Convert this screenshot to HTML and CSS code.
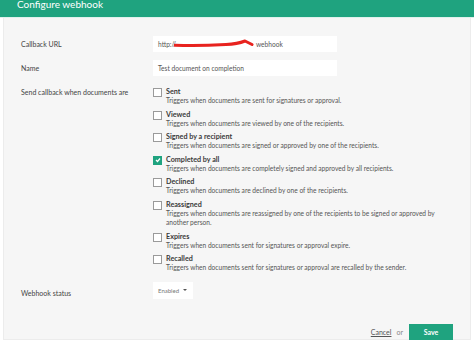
FILE: index.html
```html
<!DOCTYPE html>
<html>
<head>
  <meta charset="utf-8" />
  <title>Configure webhook</title>
  <link rel="stylesheet" href="styles.css">
</head>
<body>
  <div class="header">
    <h1>Configure webhook</h1>
  </div>

  <form class="panel">
    <div class="row">
      <label class="label">Callback URL</label>
      <div class="field">
        <div class="input">http://<span class="redact"><svg width="80" height="9" viewBox="0 0 80 9"><path d="M1 6.2 C18 6.8 36 6.4 52 5.6 C60 5.2 66 4 71 2 L78 5.5" stroke="#e8231f" stroke-width="3" fill="none" stroke-linecap="round" stroke-linejoin="round"/></svg></span>webhook</div>
      </div>
    </div>
    <div class="row">
      <label class="label">Name</label>
      <div class="field">
        <div class="input">Test document on completion</div>
      </div>
    </div>
    <div class="row">
      <label class="label">Send callback when documents are</label>
      <div class="field checks">
        <div class="check">
          <span class="box"></span>
          <div><div class="title">Sent</div><div class="desc">Triggers when documents are sent for signatures or approval.</div></div>
        </div>
        <div class="check">
          <span class="box"></span>
          <div><div class="title">Viewed</div><div class="desc">Triggers when documents are viewed by one of the recipients.</div></div>
        </div>
        <div class="check">
          <span class="box"></span>
          <div><div class="title">Signed by a recipient</div><div class="desc">Triggers when documents are signed or approved by one of the recipients.</div></div>
        </div>
        <div class="check">
          <span class="box checked"><svg width="6" height="6" viewBox="0 0 6 6"><path d="M1 3 L2.5 4.5 L5 1.5" stroke="#fff" stroke-width="1.2" fill="none"/></svg></span>
          <div><div class="title">Completed by all</div><div class="desc">Triggers when documents are completely signed and approved by all recipients.</div></div>
        </div>
        <div class="check">
          <span class="box"></span>
          <div><div class="title">Declined</div><div class="desc">Triggers when documents are declined by one of the recipients.</div></div>
        </div>
        <div class="check">
          <span class="box"></span>
          <div><div class="title">Reassigned</div><div class="desc">Triggers when documents are reassigned by one of the recipients to be signed or approved by another person.</div></div>
        </div>
        <div class="check">
          <span class="box"></span>
          <div><div class="title">Expires</div><div class="desc">Triggers when documents sent for signatures or approval expire.</div></div>
        </div>
        <div class="check">
          <span class="box"></span>
          <div><div class="title">Recalled</div><div class="desc">Triggers when documents sent for signatures or approval are recalled by the sender.</div></div>
        </div>
      </div>
    </div>
    <div class="row status">
      <label class="label">Webhook status</label>
      <div class="field">
        <div class="select">Enabled <span class="caret"></span></div>
      </div>
    </div>
    <div class="actions">
      <a class="cancel">Cancel</a>
      <span class="or">or</span>
      <button type="button" class="save">Save</button>
    </div>
  </form>
</body>
</html>
```

FILE: styles.css
```css
body {
  margin: 0;
  background: #fff;
  font-family: Lato, "Open Sans", sans-serif;
  color: #444;
  width: 474px;
  height: 345px;
  overflow: hidden;
}
.header {
  height: 17px;
  background: #1fa37f;
  border-bottom: 1px solid #dff1ec;
  overflow: hidden;
}
.header h1 {
  margin: -4px 0 0 17px;
  font-size: 10px;
  font-weight: 400;
  line-height: 16px;
  color: #fff;
}
.panel {
  margin: 0 3px 0 3px;
  height: 322px;
  background: #f6f6f6;
  border: 1px solid #ececec;
  border-top: none;
  padding: 18px 0 0 17px;
  box-sizing: border-box;
  font-size: 7px;
}
.row {
  display: grid;
  grid-template-columns: 132px 1fr;
  margin-bottom: 8px;
}
.label {
  line-height: 16px;
  color: #444;
}
.input {
  width: 184px;
  height: 16px;
  box-sizing: border-box;
  background: #fff;
  line-height: 16px;
  padding-left: 5px;
  font-size: 6.6px;
  color: #555;
  display: flex;
  align-items: center;
}
.redact {
  display: inline-flex;
  margin: 0 2px 1px -2px;
}
.checks {
  padding-top: 3px;
}
.check {
  display: flex;
  gap: 4px;
  margin-bottom: 4px;
}
.box {
  width: 7px;
  height: 7px;
  border: 1px solid #9a9a9a;
  background: #fff;
  flex: none;
  margin-top: 1px;
  display: flex;
  align-items: center;
  justify-content: center;
}
.box.checked {
  background: #1fa37f;
  border-color: #1fa37f;
}
.title {
  font-size: 7.2px;
  font-weight: 700;
  color: #3a3a3a;
  line-height: 9px;
}
.desc {
  font-size: 6.6px;
  line-height: 9.5px;
  color: #555;
  max-width: 272px;
}
.status {
  margin-top: 6px;
}
.select {
  width: 40px;
  height: 17px;
  margin-top: -3px;
  box-sizing: border-box;
  background: #fff;
  font-size: 6px;
  color: #777;
  padding-left: 5px;
  display: flex;
  align-items: center;
  gap: 4px;
}
.caret {
  width: 0;
  height: 0;
  border-left: 2px solid transparent;
  border-right: 2px solid transparent;
  border-top: 2.5px solid #555;
}
.actions {
  display: flex;
  justify-content: flex-end;
  align-items: center;
  gap: 5px;
  margin-top: 23px;
  padding-right: 17px;
}
.cancel {
  color: #555;
  text-decoration: underline;
  font-size: 7px;
}
.or {
  color: #888;
  font-size: 7px;
  margin-right: 1px;
}
.save {
  width: 44px;
  height: 16px;
  border: none;
  background: #1fa37f;
  color: #fff;
  font-family: Lato, sans-serif;
  font-size: 7px;
  font-weight: 700;
  padding: 0;
}
```
